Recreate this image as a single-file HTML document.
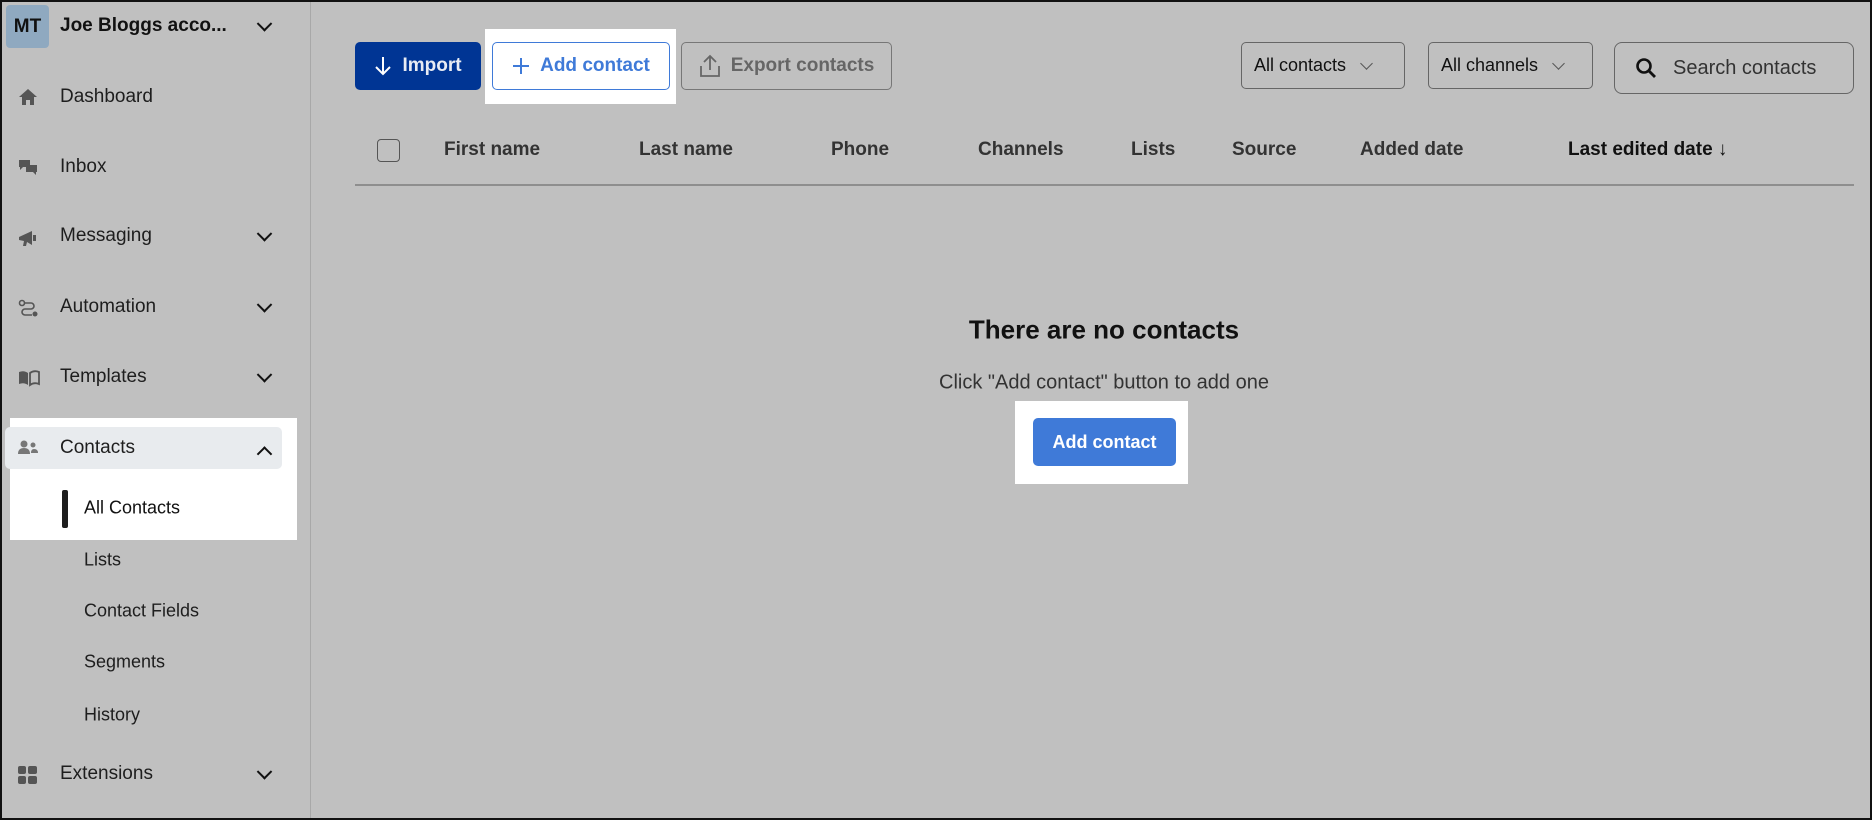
<!DOCTYPE html>
<html><head><meta charset="utf-8"><style>
*{box-sizing:border-box;margin:0;padding:0}
body{width:1872px;height:820px;background:#c0c0c0;font-family:"Liberation Sans",sans-serif;position:relative;overflow:hidden;color:#1f1f1f}
.frame{position:absolute;left:0;top:0;width:1872px;height:820px;border:2px solid #111;pointer-events:none}
.a{position:absolute}
.side{left:0;top:0;width:311px;height:820px;border-right:1px solid #a8a8a8}
.nav{position:absolute;left:60px;font-size:19px;color:#1e1e1e;transform:translateY(-50%)}
.sub{position:absolute;left:84px;font-size:18px;color:#1e1e1e;transform:translateY(-50%)}
.chev{position:absolute;left:259px;width:11px;height:11px;border-right:2.5px solid #111;border-bottom:2.5px solid #111;transform:translateY(-70%) rotate(45deg)}
.ic{position:absolute;left:18px;transform:translateY(-50%)}
.btn{position:absolute;top:42px;height:48px;border-radius:5px;font-size:19px;font-weight:bold;display:flex;align-items:center;justify-content:center;gap:10px}
.th{position:absolute;top:150px;transform:translateY(-50%);font-size:19px;font-weight:bold;color:#333}
.dd{position:absolute;top:42px;height:47px;border:1px solid #666;border-radius:5px;font-size:18px;color:#111;padding-left:12px;display:flex;align-items:center}
.dd i{display:inline-block;width:9px;height:9px;border-right:1.5px solid #555;border-bottom:1.5px solid #555;transform:rotate(45deg);margin-left:16px;margin-top:-5px}
</style></head><body>
<div class="a side">
 <div class="a" style="left:6px;top:5px;width:43px;height:43px;background:#8fa9c0;border-radius:4px;font-weight:bold;font-size:19px;display:flex;align-items:center;justify-content:center;color:#111">MT</div>
 <div class="nav" style="top:26px;font-weight:bold;color:#111">Joe Bloggs acco...</div>
 <div class="chev" style="top:26px"></div>

 <svg class="ic" style="top:97px" width="20" height="18" viewBox="0 0 20 18"><path d="M10 1 L19 9 H16 V17 H12 V12 H8 V17 H4 V9 H1 Z" fill="#555"/></svg>
 <div class="nav" style="top:97px">Dashboard</div>
 <svg class="ic" style="top:167px" width="20" height="16" viewBox="0 0 20 16"><path d="M1 1H12V8H5L2 11V8H1Z" fill="#555"/><path d="M8 6H19V13H18V16L15 13H8Z" fill="#555"/></svg>
 <div class="nav" style="top:167px">Inbox</div>
 <svg class="ic" style="top:238px" width="22" height="18" viewBox="0 0 22 18"><path d="M1 8 L14 2 V16 L9 13 L8 17 H5 L6 12 L1 11Z" fill="#555"/><rect x="15" y="6" width="3" height="6" fill="#555"/></svg>
 <div class="nav" style="top:236px">Messaging</div>
 <div class="chev" style="top:236px"></div>
 <svg class="ic" style="top:308px" width="22" height="18" viewBox="0 0 22 18"><circle cx="4" cy="4" r="2.5" fill="none" stroke="#555" stroke-width="1.6"/><path d="M6 4 H13 A3 3 0 0 1 13 10 H7 A3 3 0 0 0 7 16 H14" fill="none" stroke="#555" stroke-width="1.6"/><circle cx="17" cy="15" r="2.5" fill="#555"/></svg>
 <div class="nav" style="top:307px">Automation</div>
 <div class="chev" style="top:307px"></div>
 <svg class="ic" style="top:378px" width="22" height="18" viewBox="0 0 22 18"><path d="M1 3 Q6 1 10 4 V16 Q6 13 1 15Z" fill="#555"/><path d="M12 4 Q16 1 21 3 V15 Q16 13 12 16Z" fill="none" stroke="#555" stroke-width="1.8"/></svg>
 <div class="nav" style="top:377px">Templates</div>
 <div class="chev" style="top:377px"></div>

 <div class="a" style="left:10px;top:418px;width:287px;height:122px;background:#fff"></div>
 <div class="a" style="left:5px;top:427px;width:277px;height:42px;background:#e8ebee;border-radius:5px"></div>
 <svg class="ic" style="top:448px" width="20" height="16" viewBox="0 0 20 16"><circle cx="6" cy="4" r="3.5" fill="#777"/><path d="M0 14 Q0 8 6 8 Q12 8 12 14Z" fill="#777"/><circle cx="15" cy="5" r="2.5" fill="#777"/><path d="M13 13 Q13 9 16 9 Q20 9 20 13Z" fill="#777"/></svg>
 <div class="nav" style="top:448px">Contacts</div>
 <div class="chev" style="top:454px;transform:translateY(-50%) rotate(-135deg)"></div>
 <div class="a" style="left:62px;top:490px;width:6px;height:38px;background:#1e1e1e;border-radius:2px"></div>
 <div class="sub" style="top:508px;color:#111">All Contacts</div>
 <div class="sub" style="top:560px">Lists</div>
 <div class="sub" style="top:611px">Contact Fields</div>
 <div class="sub" style="top:662px">Segments</div>
 <div class="sub" style="top:715px">History</div>
 <svg class="ic" style="top:775px" width="20" height="20" viewBox="0 0 20 20"><rect x="0" y="1" width="8" height="8" rx="2" fill="#555"/><rect x="10" y="1" width="9" height="8" rx="2" fill="#555"/><rect x="0" y="11" width="8" height="8" rx="2" fill="#555"/><rect x="10" y="11" width="9" height="8" rx="2" fill="#555"/></svg>
 <div class="nav" style="top:774px">Extensions</div>
 <div class="chev" style="top:774px"></div>
</div>

<div class="btn" style="left:355px;width:126px;background:#003594;color:#e8ecf4">
 <svg width="18" height="22" viewBox="0 0 18 22"><path d="M9 2V19M2 12L9 19L16 12" fill="none" stroke="#fff" stroke-width="2"/></svg>Import</div>
<div class="a" style="left:485px;top:29px;width:191px;height:75px;background:#fff"></div>
<div class="btn" style="left:492px;width:178px;border:1.5px solid #3f7ad8;color:#3f7ad8;background:#fff">
 <svg width="18" height="18" viewBox="0 0 18 18"><path d="M9 1V17M1 9H17" stroke="#3f7ad8" stroke-width="2"/></svg>Add contact</div>
<div class="btn" style="left:681px;width:211px;border:1.5px solid #777;color:#666">
 <svg width="22" height="24" viewBox="0 0 22 24"><path d="M11 16V2M5 8L11 2L17 8M2 12V22H20V12" fill="none" stroke="#666" stroke-width="1.8"/></svg>Export contacts</div>

<div class="dd" style="left:1241px;width:164px">All contacts<i></i></div>
<div class="dd" style="left:1428px;width:165px">All channels<i></i></div>
<div class="dd" style="left:1614px;width:240px;height:52px;border-radius:8px;padding-left:20px;font-size:20px;color:#333">
 <svg width="22" height="22" viewBox="0 0 22 22" style="margin-right:16px"><circle cx="9" cy="9" r="6.5" fill="none" stroke="#111" stroke-width="2.6"/><path d="M14 14L20 20" stroke="#111" stroke-width="2.8"/></svg>Search contacts</div>

<div class="a" style="left:377px;top:139px;width:23px;height:23px;border:1.5px solid #555;border-radius:4px"></div>
<div class="th" style="left:444px">First name</div>
<div class="th" style="left:639px">Last name</div>
<div class="th" style="left:831px">Phone</div>
<div class="th" style="left:978px">Channels</div>
<div class="th" style="left:1131px">Lists</div>
<div class="th" style="left:1232px">Source</div>
<div class="th" style="left:1360px">Added date</div>
<div class="th" style="left:1568px;color:#111">Last edited date ↓</div>
<div class="a" style="left:355px;top:184px;width:1499px;height:2px;background:#8e8e8e"></div>

<div class="a" style="left:904px;width:400px;top:330px;transform:translateY(-50%);text-align:center;font-size:26px;font-weight:bold;color:#111">There are no contacts</div>
<div class="a" style="left:904px;width:400px;top:383px;transform:translateY(-50%);text-align:center;font-size:20px;color:#333">Click "Add contact" button to add one</div>
<div class="a" style="left:1015px;top:401px;width:173px;height:83px;background:#fff"></div>
<div class="a" style="left:1033px;top:418px;width:143px;height:48px;background:#3f7ad8;border-radius:5px;color:#fff;font-weight:bold;font-size:18px;display:flex;align-items:center;justify-content:center">Add contact</div>
<div class="frame"></div>
</body></html>
